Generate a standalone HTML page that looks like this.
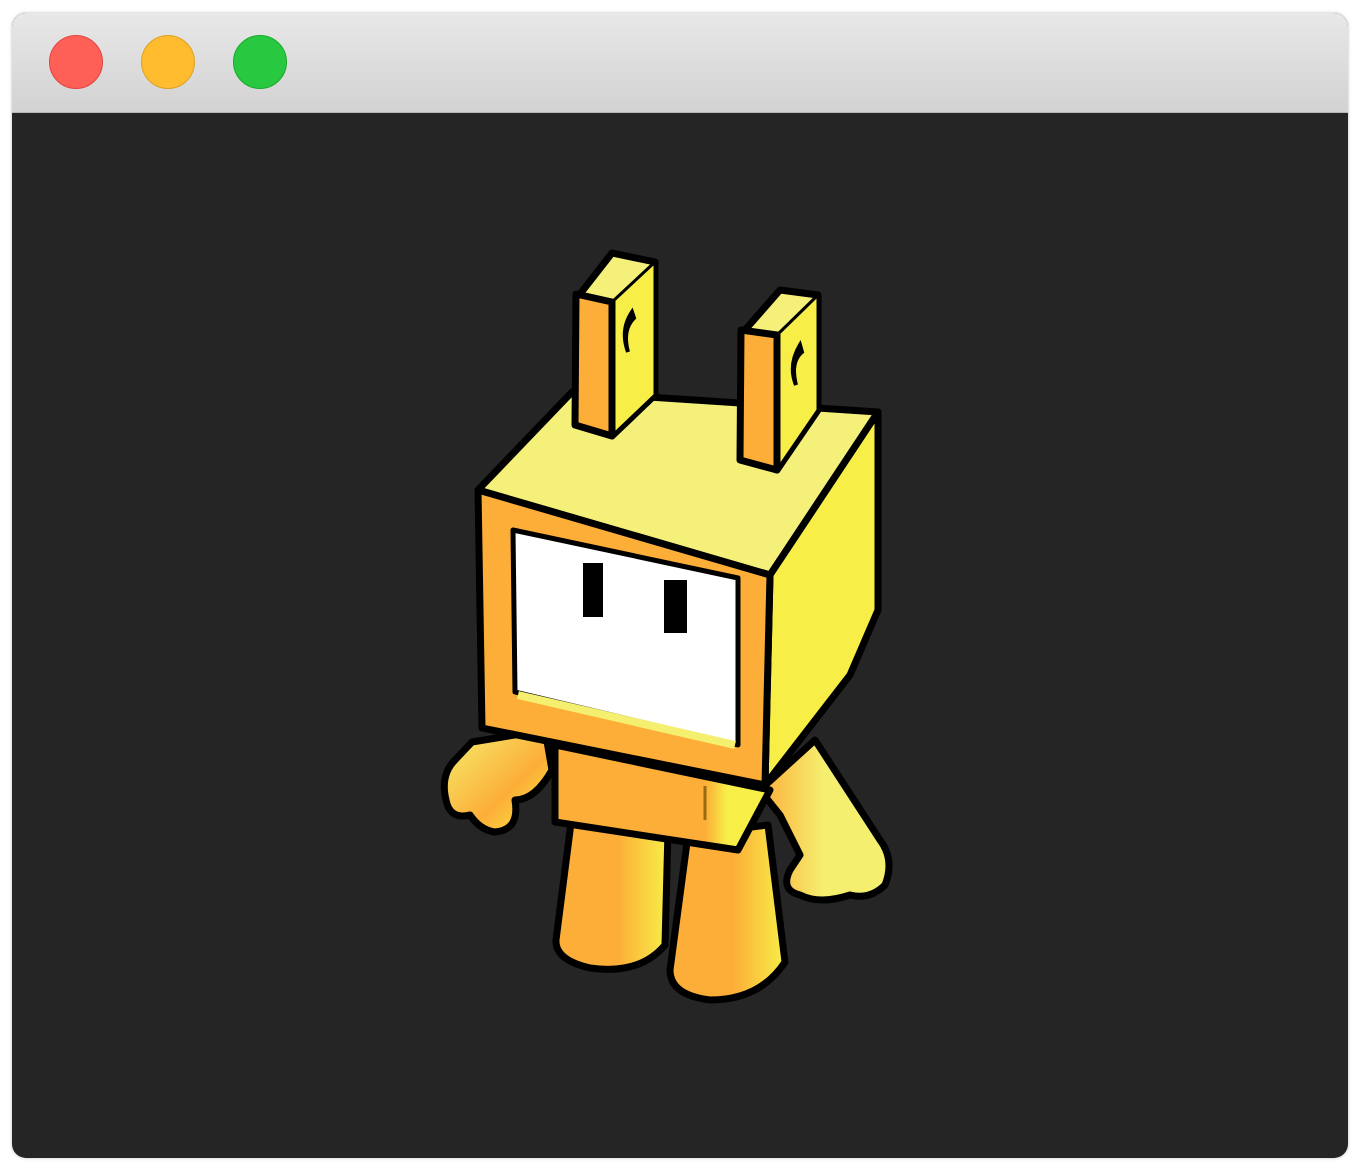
<!DOCTYPE html>
<html><head><meta charset="utf-8"><style>
html,body{margin:0;padding:0;background:#fff;width:1360px;height:1171px;overflow:hidden}
.win{position:absolute;left:12px;top:13px;width:1336px;height:1145px;border-radius:14px;overflow:hidden;background:#252525;box-shadow:0 0 3px rgba(0,0,0,.25)}
.bar{position:absolute;left:0;top:0;width:100%;height:99px;background:linear-gradient(#e8e8e8,#d2d2d2);border-bottom:1px solid #b5b5b5}
.d{position:absolute;top:22px;width:54px;height:54px;border-radius:50%;box-sizing:border-box}
svg{position:absolute;left:0;top:0}
</style></head><body>
<div class="win"><div class="bar">
<div class="d" style="left:37px;background:#fe5f57;border:1px solid #e0443e"></div>
<div class="d" style="left:129px;background:#febc2e;border:1px solid #dea123"></div>
<div class="d" style="left:221px;background:#28c840;border:1px solid #1aab29"></div>
</div></div>
<svg width="1360" height="1171" viewBox="0 0 1360 1171">
<defs>
<linearGradient id="lg" x1="0" x2="1" y1="0" y2="0"><stop offset="0" stop-color="#fcae38"/><stop offset=".55" stop-color="#fcae38"/><stop offset="1" stop-color="#f7ef48"/></linearGradient>
<linearGradient id="bg" gradientUnits="userSpaceOnUse" x1="555" x2="770" y1="0" y2="0"><stop offset="0" stop-color="#fcae38"/><stop offset=".7" stop-color="#fcae38"/><stop offset=".8" stop-color="#f7ef48"/><stop offset="1" stop-color="#f7ef48"/></linearGradient>
<linearGradient id="ag" x1="0" x2="1" y1="0" y2="1"><stop offset="0" stop-color="#f5ef70"/><stop offset=".6" stop-color="#fcae38"/><stop offset="1" stop-color="#f7ef48"/></linearGradient>
<linearGradient id="ag2" x1="0" x2="1" y1="0" y2="0"><stop offset="0" stop-color="#fcae38"/><stop offset=".5" stop-color="#f5ef70"/><stop offset="1" stop-color="#f5ef70"/></linearGradient>
</defs>
<g stroke="#000" stroke-width="7" stroke-linejoin="round">
<path d="M572 815 L668 830 L665 945 Q640 975 590 968 Q555 960 556 940 Z" fill="url(#lg)"/>
<path d="M688 835 L768 825 L785 962 Q760 1000 710 1000 Q670 995 670 970 Z" fill="url(#lg)"/>
<path d="M472 742 L545 730 L552 770 Q535 800 515 800 Q520 830 495 832 Q480 830 470 815 Q450 820 446 800 Q440 775 455 760 Z" fill="url(#ag)"/>
<path d="M760 790 L815 740 L880 840 Q895 860 885 885 Q870 900 850 895 Q820 905 800 895 Q780 890 790 870 L800 855 L780 815 Z" fill="url(#ag2)"/>
<path d="M555 745 L770 790 L738 850 L555 822 Z" fill="url(#bg)"/>
<path d="M478 490 L572 392 L878 412 L770 575 Z" fill="#f5f07a"/>
<path d="M770 575 L878 412 L878 610 L850 675 L765 785 Z" fill="#f7ef48"/>
<path d="M478 490 L770 575 L765 785 L482 728 Z" fill="#fcae38"/>
<path d="M513 530 L738 578 L738 745 L515 692 Z" fill="#fff" stroke-width="5"/>
<path d="M580 294 L612 253 L655 262 L655 395 L612 436 Z" fill="#f5f07a"/>
<path d="M612 302 L655 262 L655 395 L612 436 Z" fill="#f7ef48" stroke-width="3"/>
<path d="M576 294 L612 302 L612 436 L575 425 Z" fill="#fcae38"/>
<path d="M745 330 L780 290 L818 295 L818 410 L777 470 Z" fill="#f5f07a"/>
<path d="M777 335 L818 295 L818 410 L777 470 Z" fill="#f7ef48" stroke-width="3"/>
<path d="M741 330 L777 335 L777 470 L740 460 Z" fill="#fcae38"/>
</g>
<path d="M632 312 Q620 330 628 352 Q622 330 634 318 Z" fill="#000" stroke="#000" stroke-width="4"/>
<path d="M800 345 Q788 365 796 385 Q790 362 802 352 Z" fill="#000" stroke="#000" stroke-width="4"/>
<rect x="583" y="563" width="20" height="54" fill="#000"/>
<rect x="664" y="580" width="23" height="53" fill="#000"/>
<path d="M518 695 L735 745" stroke="#f5ef70" stroke-width="8"/>
<line x1="705" y1="786" x2="705" y2="820" stroke="#9a6a10" stroke-width="3"/>
</svg>
</body></html>
